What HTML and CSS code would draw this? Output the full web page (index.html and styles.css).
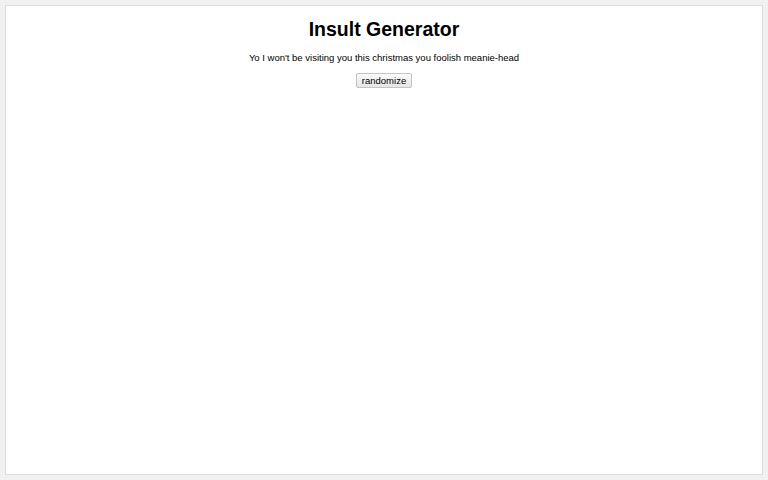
FILE: index.html
```html
<!DOCTYPE html>
<html lang="en">
<head>
    <meta charset="UTF-8">
    <title>Insult Generator</title>
    <link rel="stylesheet" href="styles.css">
</head>
<body>
    <div class="page">
        <h1>Insult Generator</h1>
        <p id="insult">Yo I won't be visiting you this christmas you foolish meanie-head</p>
        <button onclick="randomize()">randomize</button>
    </div>
    <script>
        const insults = [
            "Yo I won't be visiting you this christmas you foolish meanie-head",
            "Yo I won't be calling you this weekend you silly goose",
            "Yo I won't be sharing my fries with you you absolute noodle"
        ];
        function randomize() {
            const i = Math.floor(Math.random() * insults.length);
            document.getElementById("insult").innerText = insults[i];
        }
    </script>
</body>
</html>
```

FILE: styles.css
```css
body {
    font-family: 'Liberation Sans', Arial, sans-serif;
    background-color: #f1f1f1;
    margin: 0;
    padding: 5px;
}
.page {
    background-color: #fff;
    border: 1px solid #dcdcdc;
    height: 470px;
    box-sizing: border-box;
    text-align: center;
    padding-top: 12px;
}
h1 {
    font-size: 19.5px;
    margin: 0 0 11px;
}
p {
    font-size: 9.5px;
    margin: 0 0 7px;
}
button {
    font-family: 'Liberation Sans', Arial, sans-serif;
    font-size: 9.5px;
    padding: 1px 5px;
    background: linear-gradient(#fafafa, #e6e6e6);
    border: 1px solid #c4c4c4;
    border-radius: 2px;
}
```
